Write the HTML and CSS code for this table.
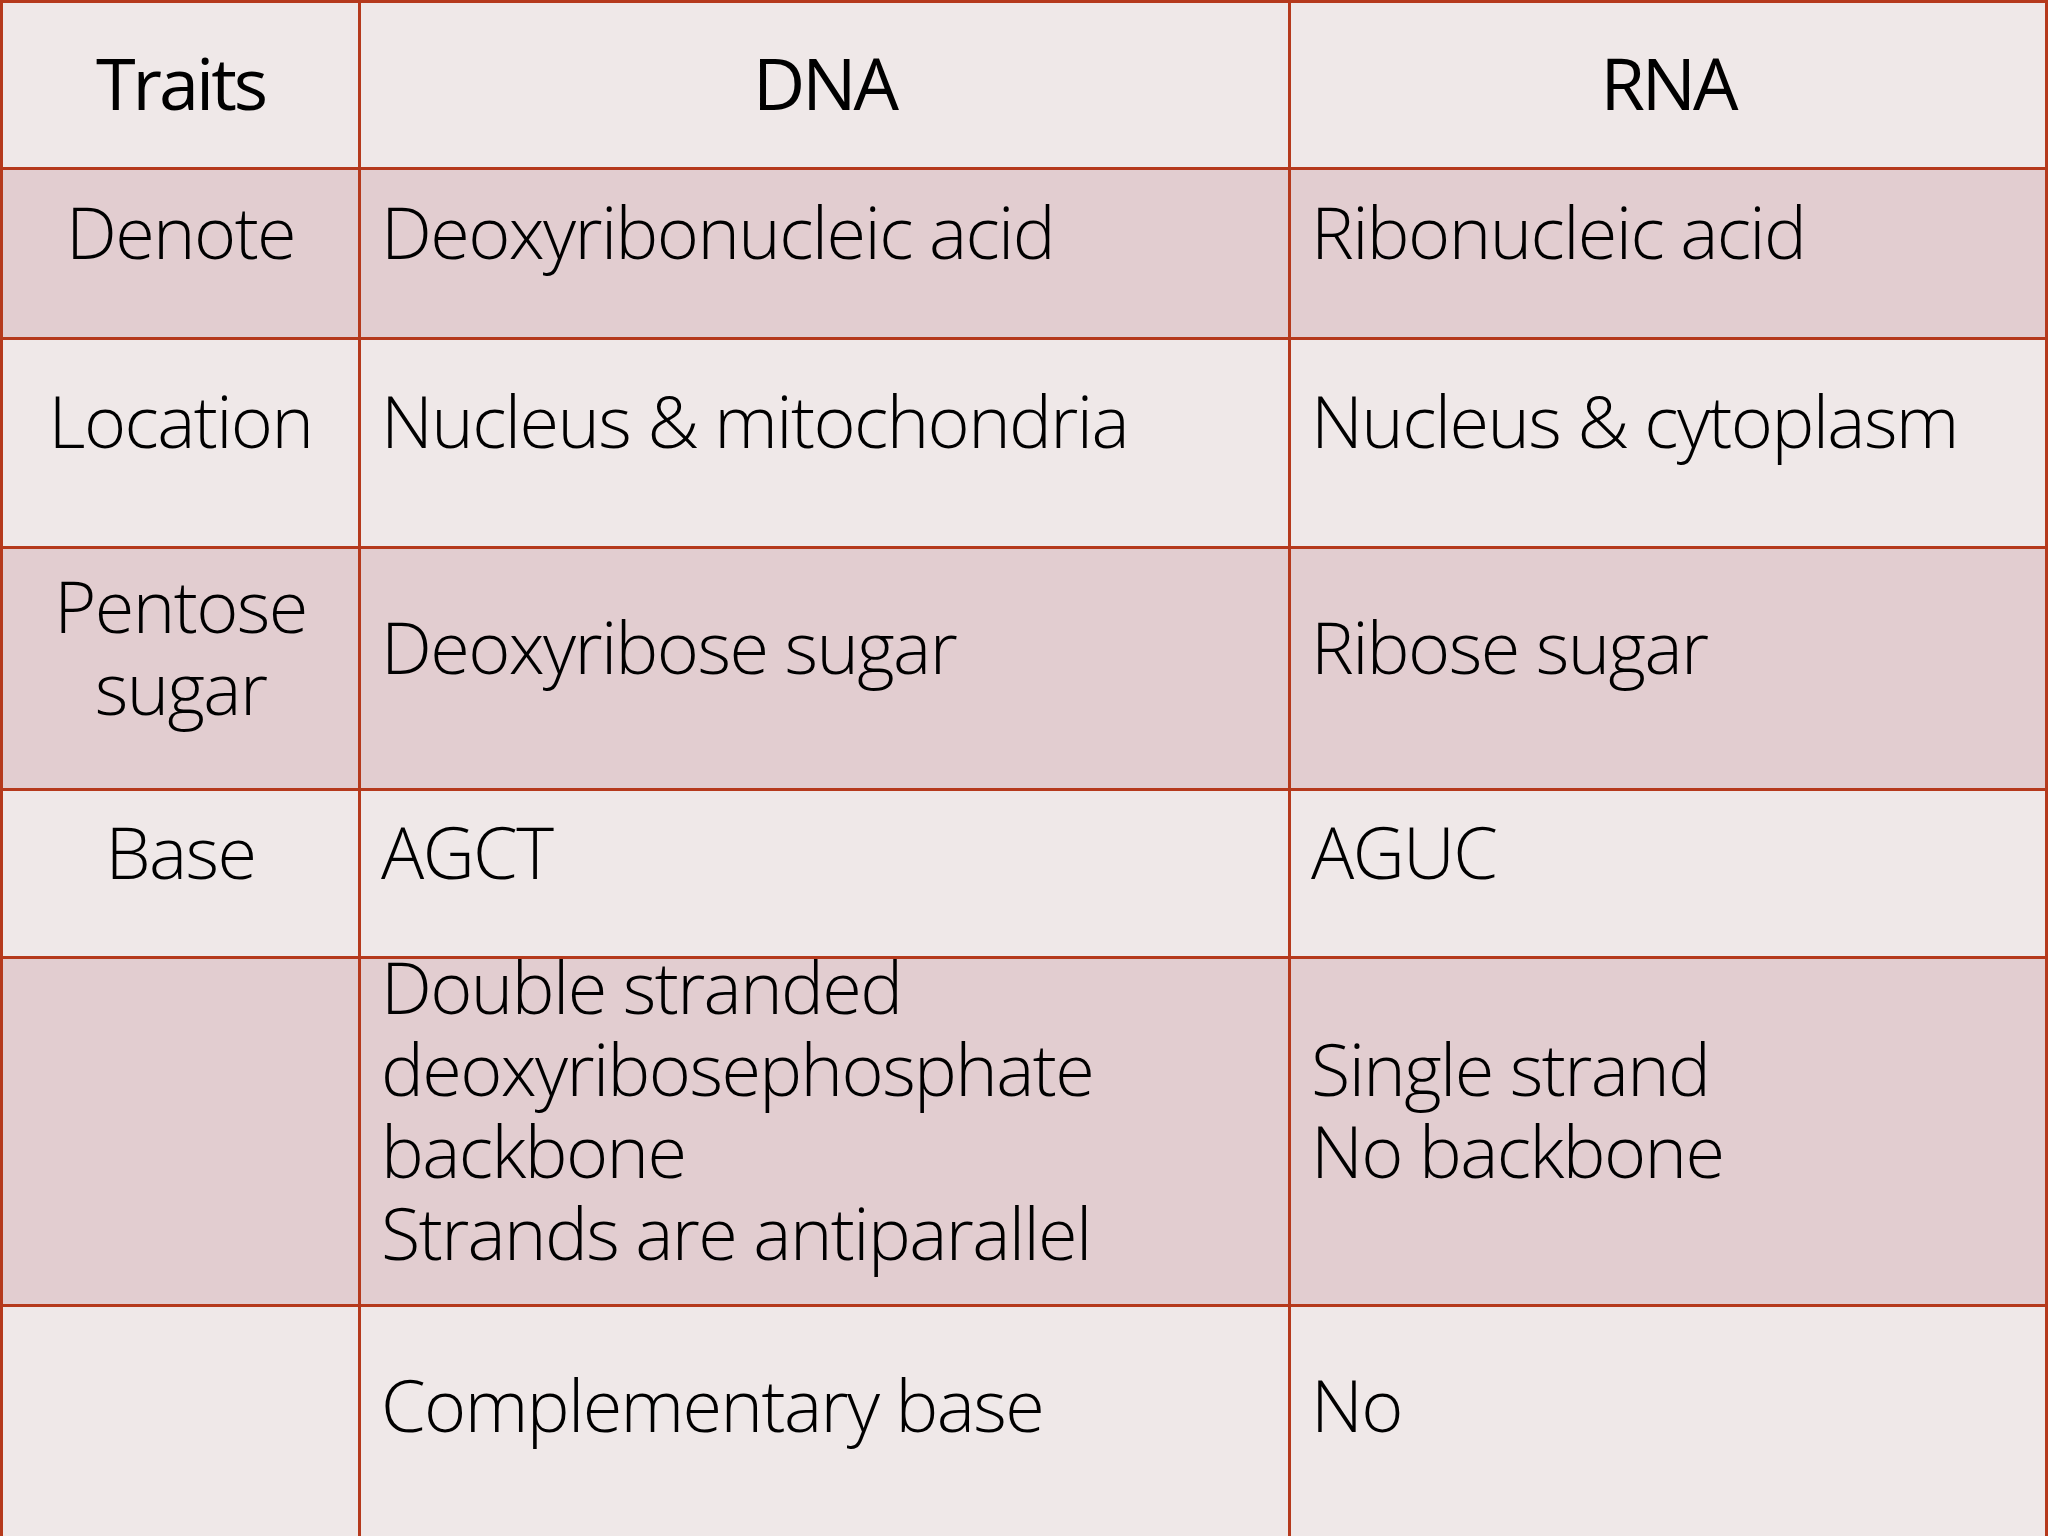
FILE: index.html
```html
<!DOCTYPE html>
<html lang="en">
<head>
<meta charset="utf-8">
<title>DNA vs RNA</title>
<link rel="stylesheet" href="styles.css">
</head>
<body>
<div class="table">
  <div class="cell head light">Traits</div>
  <div class="cell head light">DNA</div>
  <div class="cell head light">RNA</div>

  <div class="cell trait dark">Denote</div>
  <div class="cell dark">Deoxyribonucleic acid</div>
  <div class="cell dark">Ribonucleic acid</div>

  <div class="cell trait light">Location</div>
  <div class="cell light">Nucleus &amp; mitochondria</div>
  <div class="cell light">Nucleus &amp; cytoplasm</div>

  <div class="cell trait dark">Pentose<br>sugar</div>
  <div class="cell dark">Deoxyribose sugar</div>
  <div class="cell dark">Ribose sugar</div>

  <div class="cell trait light">Base</div>
  <div class="cell light">AGCT</div>
  <div class="cell light">AGUC</div>

  <div class="cell trait dark"></div>
  <div class="cell dark">Double stranded<br>deoxyribosephosphate<br>backbone<br>Strands are antiparallel</div>
  <div class="cell dark">Single strand<br>No backbone</div>

  <div class="cell trait light"></div>
  <div class="cell light">Complementary base</div>
  <div class="cell light">No</div>
</div>
</body>
</html>
```

FILE: styles.css
```css
html, body {
  margin: 0;
  padding: 0;
  width: 2048px;
  height: 1536px;
  overflow: hidden;
  background: #efe8e8;
}

.table {
  display: grid;
  grid-template-columns: 355px 927px 754px;
  grid-template-rows: 164px 167px 206px 239px 165px 345px 240px;
  gap: 3px;
  padding: 3px;
  background: #b5391c;
  width: max-content;
  font-family: "Open Sans", "Noto Sans", "Liberation Sans", sans-serif;
  color: #000;
}

.cell {
  display: flex;
  align-items: center;
  box-sizing: border-box;
  padding: 0 20px 46px 20px;
  font-size: 72px;
  font-weight: 300;
  letter-spacing: -1.6px;
  line-height: 82px;
  overflow: visible;
  white-space: nowrap;
}

.light { background: #efe8e8; }
.dark { background: #e2cdd0; }

.trait {
  justify-content: center;
  text-align: center;
  padding-left: 0;
  padding-right: 0;
}

.head {
  justify-content: center;
  font-weight: 400;
  font-size: 72px;
  letter-spacing: -3px;
  padding-bottom: 6px;
}
```
